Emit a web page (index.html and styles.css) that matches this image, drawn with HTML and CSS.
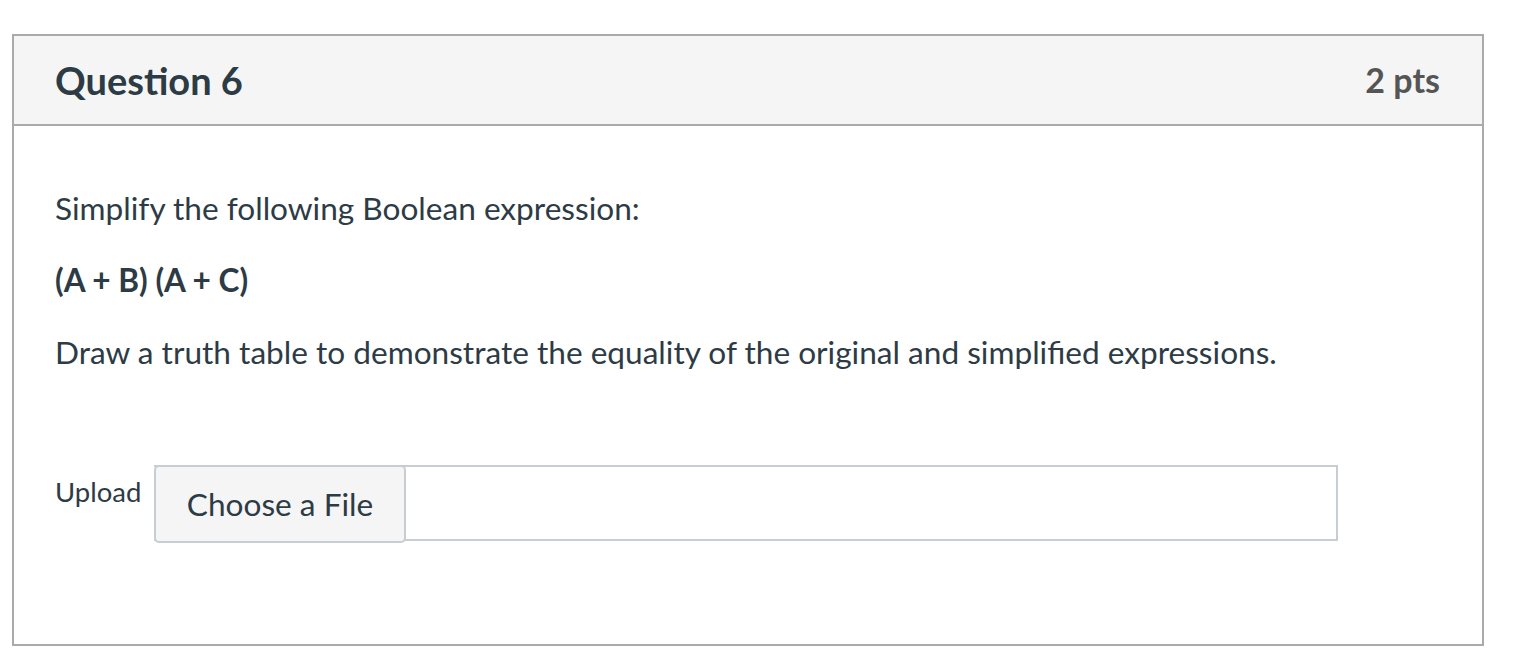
FILE: index.html
```html
<!DOCTYPE html>
<html>
<head>
<meta charset="utf-8">
<link rel="stylesheet" href="styles.css">
</head>
<body>
<div class="question">
  <div class="q-header">
    <h2 class="q-title">Question 6</h2>
    <span class="q-points">2 pts</span>
  </div>
  <div class="q-body">
    <p>Simplify the following Boolean expression:</p>
    <p class="expr">(A + B) (A + C)</p>
    <p>Draw a truth table to demonstrate the equality of the original and simplified expressions.</p>
    <div class="upload-row">
      <span class="upload-label">Upload</span>
      <div class="file-field">
        <button class="file-btn" type="button">Choose a File</button>
        <div class="file-name"></div>
      </div>
    </div>
  </div>
</div>
</body>
</html>
```
FILE: styles.css
```css
html, body {
  margin: 0;
  padding: 0;
  background: #fff;
}
body {
  font-family: Lato, "Open Sans", sans-serif;
  color: #2d3b45;
  padding: 34px 32px 0 12px;
}
.question {
  width: 1468px;
  height: 608px;
  border: 2px solid #aaaaaa;
  box-sizing: content-box;
}
.q-header {
  height: 88px;
  background: #f5f5f5;
  border-bottom: 2px solid #aaaaaa;
  display: flex;
  align-items: center;
  justify-content: space-between;
  padding: 0 42px 0 41px;
}
.q-title {
  margin: 0;
  font-size: 38px;
  line-height: 1;
  font-weight: 700;
  color: #2d3b45;
}
.q-points {
  font-size: 34px;
  line-height: 1;
  font-weight: 700;
  color: #555555;
}
.q-body {
  padding: 64px 41px 0 41px;
}
.q-body p {
  margin: 0 0 36px 0;
  font-size: 31.6px;
  line-height: 36px;
}
.expr {
  font-weight: 700;
}
.upload-row {
  display: flex;
  align-items: flex-start;
  margin-top: 95px;
}
.upload-label {
  font-size: 27.5px;
  line-height: 28px;
  padding-top: 13px;
  width: 100px;
}
.file-field {
  display: flex;
  width: 1184px;
  height: 76px;
  border: 2px solid #c7cdd1;
  border-left: none;
  margin-left: -1px;
  box-sizing: border-box;
}
.file-btn {
  font-family: Lato, "Open Sans", sans-serif;
  font-size: 31.6px;
  color: #2d3b45;
  background: #f5f5f5;
  border: 2px solid #c7cdd1;
  border-radius: 5px;
  width: 252px;
  height: 78px;
  margin-top: -2px;
  padding: 0;
}
.file-name {
  flex: 1;
}
```
